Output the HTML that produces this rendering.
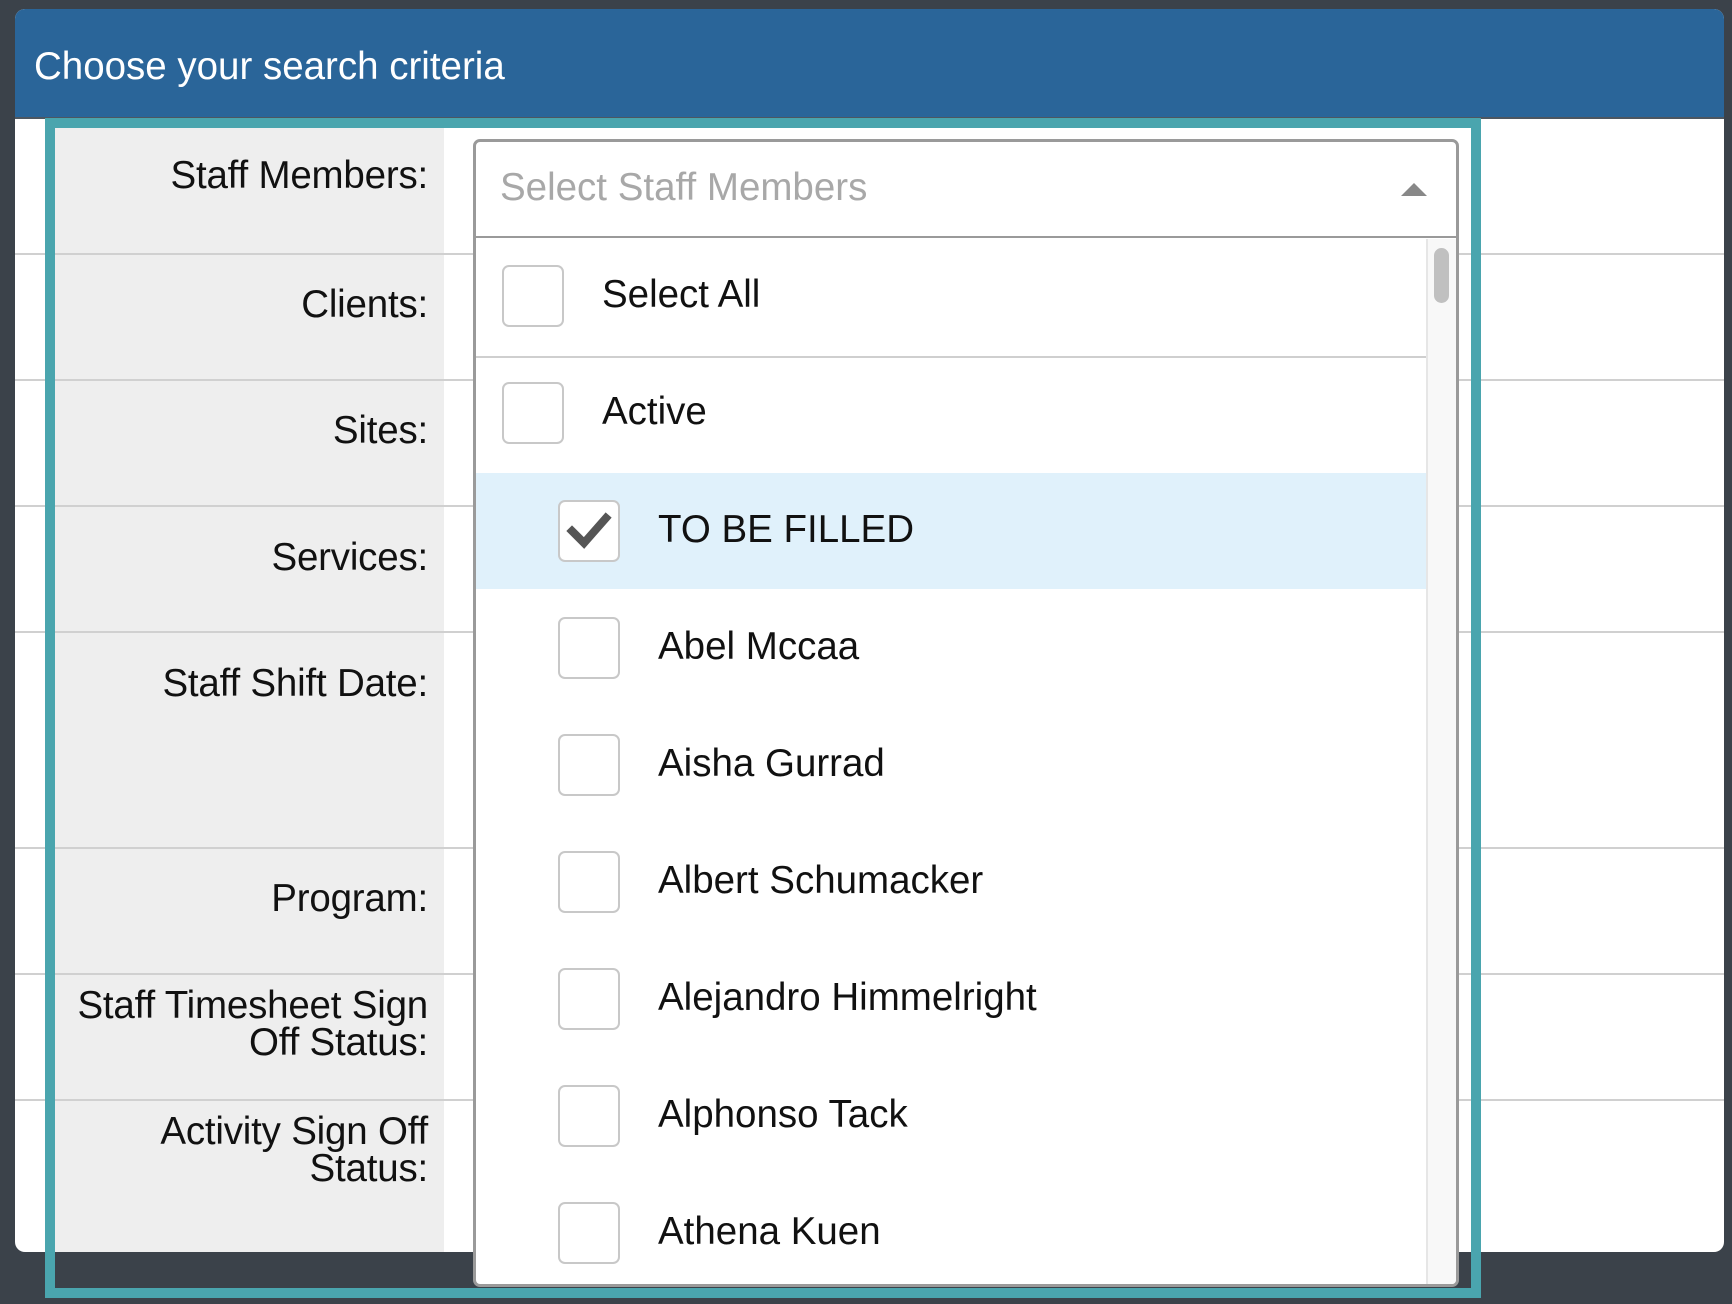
<!DOCTYPE html>
<html><head><style>
*{margin:0;padding:0;box-sizing:border-box}
body{width:1732px;height:1304px;background:#3b424a;position:relative;overflow:hidden;font-family:"Liberation Sans",Arial,sans-serif}
.abs{position:absolute}
.panel{left:15px;top:9px;width:1709px;height:1243px;background:#fff;border-radius:10px;overflow:hidden}
.hdr{left:0;top:0;width:100%;height:110px;background:#2a6599;border-bottom:2px solid #4d5761}
.hdr span{position:absolute;left:19px;top:36px;color:#fff;font-size:38.5px}
.sep{left:0;width:1709px;height:2px;background:#d0d0d0}
.gray{left:55px;top:128px;width:389px;height:1124px;background:#eee}
.lbl{right:1304px;text-align:right;font-size:38.5px;color:#111;line-height:37px;letter-spacing:-0.2px}
.teal{left:45px;top:118px;width:1436px;height:1180px;border:10px solid #4aa5ae}
.dd{left:473px;top:139px;width:986px;height:1148px;border:3px solid #9a9a9a;border-radius:7px;background:#fff;overflow:hidden}
.ph{left:24px;top:24px;font-size:38.5px;color:#a8a8a8}
.caret{left:925px;top:41px;width:0;height:0;border-left:13px solid transparent;border-right:13px solid transparent;border-bottom:13px solid #888}
.div{left:0;width:100%;height:2px;background:#9a9a9a}
.cb{width:62px;height:62px;border:2px solid #c8c8c8;border-radius:7px;background:#fff}
.it{font-size:38.5px;color:#111}
.sb{left:950px;top:97px;width:33px;height:1060px;background:#f8f8f8;border-left:2px solid #e6e6e6}
.thumb{left:958px;top:106px;width:15px;height:55px;background:#c0c0c0;border-radius:8px}
</style></head><body>
<div class="abs panel">
  <div class="abs hdr"><span>Choose your search criteria</span></div>
</div>
<div class="abs gray"></div>
<div class="abs sep" style="left:15px;top:253px;width:1709px"></div>
<div class="abs sep" style="left:15px;top:379px;width:1709px"></div>
<div class="abs sep" style="left:15px;top:505px;width:1709px"></div>
<div class="abs sep" style="left:15px;top:631px;width:1709px"></div>
<div class="abs sep" style="left:15px;top:847px;width:1709px"></div>
<div class="abs sep" style="left:15px;top:973px;width:1709px"></div>
<div class="abs sep" style="left:15px;top:1099px;width:1709px"></div>
<div class="abs lbl" style="top:157px">Staff Members:</div>
<div class="abs lbl" style="top:286px">Clients:</div>
<div class="abs lbl" style="top:412px">Sites:</div>
<div class="abs lbl" style="top:539px">Services:</div>
<div class="abs lbl" style="top:665px">Staff Shift Date:</div>
<div class="abs lbl" style="top:880px">Program:</div>
<div class="abs lbl" style="top:987px">Staff Timesheet Sign<br>Off Status:</div>
<div class="abs lbl" style="top:1113px">Activity Sign Off<br>Status:</div>
<div class="abs teal"></div>
<div class="abs dd">
  <div class="abs ph">Select Staff Members</div>
  <div class="abs caret"></div>
  <div class="abs div" style="top:94px"></div>
  <div class="abs" style="left:0;top:331px;width:952px;height:116px;background:#e0f1fb"></div>
  <div class="abs div" style="top:214px;width:952px;background:#cfcfcf"></div>
  <div class="abs cb" style="left:26px;top:123px"></div><div class="abs it" style="left:126px;top:131px">Select All</div>
  <div class="abs cb" style="left:26px;top:240px"></div><div class="abs it" style="left:126px;top:248px">Active</div>
  <div class="abs cb" style="left:82px;top:358px"></div>
  <svg class="abs" style="left:88px;top:364px" width="50" height="50" viewBox="0 0 50 50"><path d="M8 25 L20 37 L42 12" fill="none" stroke="#555" stroke-width="8" stroke-linecap="square"/></svg>
  <div class="abs it" style="left:182px;top:366px">TO BE FILLED</div>
  <div class="abs cb" style="left:82px;top:475px"></div><div class="abs it" style="left:182px;top:483px">Abel Mccaa</div>
  <div class="abs cb" style="left:82px;top:592px"></div><div class="abs it" style="left:182px;top:600px">Aisha Gurrad</div>
  <div class="abs cb" style="left:82px;top:709px"></div><div class="abs it" style="left:182px;top:717px">Albert Schumacker</div>
  <div class="abs cb" style="left:82px;top:826px"></div><div class="abs it" style="left:182px;top:834px">Alejandro Himmelright</div>
  <div class="abs cb" style="left:82px;top:943px"></div><div class="abs it" style="left:182px;top:951px">Alphonso Tack</div>
  <div class="abs cb" style="left:82px;top:1060px"></div><div class="abs it" style="left:182px;top:1068px">Athena Kuen</div>
  <div class="abs sb"></div>
  <div class="abs thumb"></div>
</div>
</body></html>
